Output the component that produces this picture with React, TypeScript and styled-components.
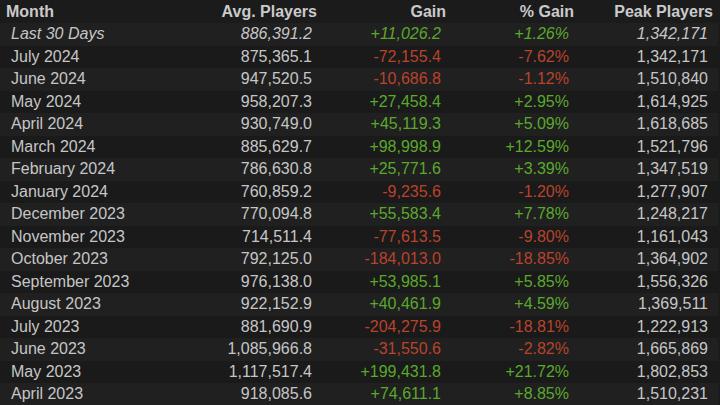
import React from 'react';
import styled, { createGlobalStyle, css } from 'styled-components';

const GlobalStyle = createGlobalStyle`
  html, body {
    margin: 0;
    padding: 0;
    background: #1b1b1b;
    overflow: hidden;
  }
  body {
    padding-top: 1px;
    font-family: "Liberation Sans", Arial, sans-serif;
  }
`;

type Row = {
  month: string;
  avg: string;
  gain: string;
  pct: string;
  peak: string;
  italic?: boolean;
};

const rows: Row[] = [
  { month: 'Last 30 Days', avg: '886,391.2', gain: '+11,026.2', pct: '+1.26%', peak: '1,342,171', italic: true },
  { month: 'July 2024', avg: '875,365.1', gain: '-72,155.4', pct: '-7.62%', peak: '1,342,171' },
  { month: 'June 2024', avg: '947,520.5', gain: '-10,686.8', pct: '-1.12%', peak: '1,510,840' },
  { month: 'May 2024', avg: '958,207.3', gain: '+27,458.4', pct: '+2.95%', peak: '1,614,925' },
  { month: 'April 2024', avg: '930,749.0', gain: '+45,119.3', pct: '+5.09%', peak: '1,618,685' },
  { month: 'March 2024', avg: '885,629.7', gain: '+98,998.9', pct: '+12.59%', peak: '1,521,796' },
  { month: 'February 2024', avg: '786,630.8', gain: '+25,771.6', pct: '+3.39%', peak: '1,347,519' },
  { month: 'January 2024', avg: '760,859.2', gain: '-9,235.6', pct: '-1.20%', peak: '1,277,907' },
  { month: 'December 2023', avg: '770,094.8', gain: '+55,583.4', pct: '+7.78%', peak: '1,248,217' },
  { month: 'November 2023', avg: '714,511.4', gain: '-77,613.5', pct: '-9.80%', peak: '1,161,043' },
  { month: 'October 2023', avg: '792,125.0', gain: '-184,013.0', pct: '-18.85%', peak: '1,364,902' },
  { month: 'September 2023', avg: '976,138.0', gain: '+53,985.1', pct: '+5.85%', peak: '1,556,326' },
  { month: 'August 2023', avg: '922,152.9', gain: '+40,461.9', pct: '+4.59%', peak: '1,369,511' },
  { month: 'July 2023', avg: '881,690.9', gain: '-204,275.9', pct: '-18.81%', peak: '1,222,913' },
  { month: 'June 2023', avg: '1,085,966.8', gain: '-31,550.6', pct: '-2.82%', peak: '1,665,869' },
  { month: 'May 2023', avg: '1,117,517.4', gain: '+199,431.8', pct: '+21.72%', peak: '1,802,853' },
  { month: 'April 2023', avg: '918,085.6', gain: '+74,611.1', pct: '+8.85%', peak: '1,510,231' },
];

const Table = styled.table`
  width: 718px;
  table-layout: fixed;
  border-collapse: collapse;
  font-size: 16px;
  color: #c6c6c6;
`;

const HeadRow = styled.tr`
  height: 22px;
  background: #1b1b1b;
`;

const HeadCell = styled.th<{ $left?: boolean }>`
  font-weight: bold;
  color: #cacaca;
  line-height: 22px;
  padding: 0 5px 0 6px;
  text-align: ${p => (p.$left ? 'left' : 'right')};
  white-space: nowrap;
`;

const BodyRow = styled.tr<{ $odd: boolean; $italic?: boolean }>`
  height: 22.5px;
  background: ${p => (p.$odd ? '#202020' : '#1a1a1a')};
  ${p => p.$italic && css`font-style: italic;`}
`;

const Cell = styled.td<{ $left?: boolean; $tone?: 'up' | 'down' }>`
  line-height: 22.5px;
  padding: 0 10px 0 11px;
  text-align: ${p => (p.$left ? 'left' : 'right')};
  white-space: nowrap;
  color: ${p => (p.$tone === 'up' ? '#5ba82c' : p.$tone === 'down' ? '#b9432b' : '#c6c6c6')};
`;

const tone = (v: string) => (v.startsWith('+') ? 'up' : 'down');

export default function App() {
  return (
    <>
      <GlobalStyle />
      <Table>
        <colgroup>
          <col style={{ width: 200 }} />
          <col style={{ width: 122 }} />
          <col style={{ width: 129 }} />
          <col style={{ width: 128 }} />
          <col style={{ width: 139 }} />
        </colgroup>
        <thead>
          <HeadRow>
            <HeadCell $left>Month</HeadCell>
            <HeadCell>Avg. Players</HeadCell>
            <HeadCell>Gain</HeadCell>
            <HeadCell>% Gain</HeadCell>
            <HeadCell>Peak Players</HeadCell>
          </HeadRow>
        </thead>
        <tbody>
          {rows.map((r, i) => (
            <BodyRow key={r.month} $odd={i % 2 === 0} $italic={r.italic}>
              <Cell $left>{r.month}</Cell>
              <Cell>{r.avg}</Cell>
              <Cell $tone={tone(r.gain)}>{r.gain}</Cell>
              <Cell $tone={tone(r.pct)}>{r.pct}</Cell>
              <Cell>{r.peak}</Cell>
            </BodyRow>
          ))}
        </tbody>
      </Table>
    </>
  );
}
